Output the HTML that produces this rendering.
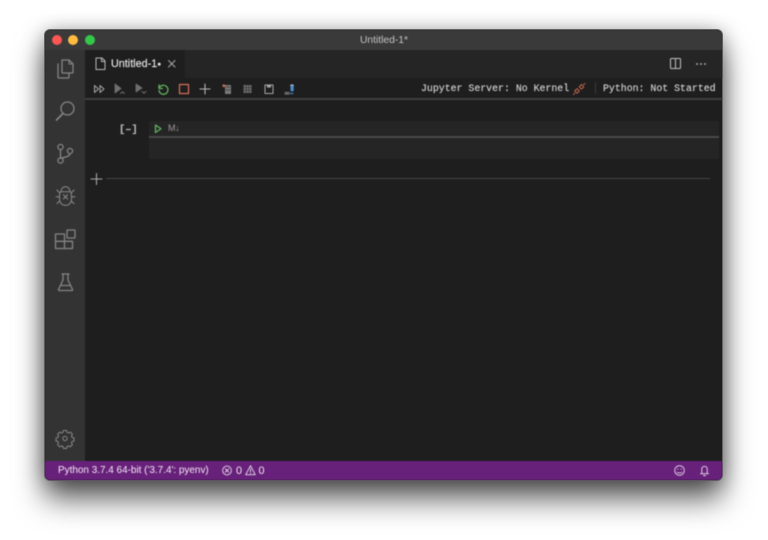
<!DOCTYPE html>
<html><head><meta charset="utf-8"><style>
html,body{margin:0;padding:0;width:768px;height:540px;overflow:hidden;background:#fff}
*{box-sizing:border-box}
.a{position:absolute}
#win{left:45px;top:30px;width:677px;height:450px;background:#1e1e1e;border-radius:5px;box-shadow:0 0 0 1px rgba(95,95,95,.85),0 19px 30px rgba(0,0,0,.62),0 2px 20px rgba(0,0,0,.38)}
#in{left:0;top:0;width:677px;height:450px;overflow:hidden;border-radius:5px;filter:blur(.4px)}
.sans{font-family:"Liberation Sans",sans-serif}
.mono{font-family:"Liberation Mono",monospace;font-size:9.9px;color:#d0d0d0;white-space:pre;-webkit-text-stroke:.15px #d0d0d0}
svg{position:absolute;overflow:visible;fill:none}
</style></head><body>
<div class="a" id="win"><div class="a" id="in">
<div class="a" style="left:0;top:0;width:677px;height:20px;background:#3a3a3a"></div>
<div class="a" style="left:7px;top:5px;width:10px;height:10px;border-radius:50%;background:#fc5753"></div>
<div class="a" style="left:23px;top:5px;width:10px;height:10px;border-radius:50%;background:#fdbc40"></div>
<div class="a" style="left:40px;top:5px;width:10px;height:10px;border-radius:50%;background:#34c84a"></div>
<div class="a sans" style="left:0;top:3px;width:678px;text-align:center;font-size:10.3px;color:#c4c4c4;line-height:15px">Untitled-1*</div>

<div class="a" style="left:0;top:20px;width:40px;height:411px;background:#333"></div>
<div class="a" style="left:40px;top:20px;width:638px;height:28px;background:#252526"></div>
<div class="a" style="left:40px;top:20px;width:100px;height:28px;background:#1e1e1e"></div>
<div class="a sans" style="left:66px;top:27px;font-size:10.8px;color:#e6e6e6;line-height:14px;white-space:pre;-webkit-text-stroke:.15px #e6e6e6">Untitled-1<span style="position:relative;top:-1.5px;font-size:6.5px">●</span></div>
<div class="a" style="left:40px;top:68px;width:638px;height:2px;background:#3f3f3f"></div>
<div class="a mono" style="left:376px;top:52px;line-height:14px">Jupyter Server: No Kernel</div>
<div class="a" style="left:550px;top:52px;width:1px;height:12px;background:#3c3c3c"></div>
<div class="a mono" style="left:558px;top:52px;line-height:14px">Python: Not Started</div>

<div class="a mono" style="left:74px;top:92.500px;line-height:14px;font-size:10.400px;font-weight:bold;color:#b4b4b4;-webkit-text-stroke:.2px #b4b4b4">[–]</div>
<div class="a" style="left:104px;top:91px;width:570px;height:38px;background:#252526"></div>
<div class="a" style="left:104px;top:106px;width:570px;height:2px;background:#4a4a4a"></div>
<div class="a sans" style="left:123px;top:92px;font-size:9px;color:#9a9a9a;line-height:13px;letter-spacing:-.3px">M↓</div>
<div class="a" style="left:61px;top:148px;width:604px;height:1px;background:#444"></div>

<div class="a" style="left:0;top:431px;width:677px;height:19px;background:#68217a"></div>
<div class="a sans" style="left:13px;top:433.500px;font-size:9.950px;color:#f3e9f5;line-height:14px;white-space:pre">Python 3.7.4 64-bit ('3.7.4': pyenv)</div>
<div class="a sans" style="left:191px;top:433.500px;font-size:10.800px;color:#f3e9f5;line-height:14px">0</div>
<div class="a sans" style="left:213.500px;top:433.500px;font-size:10.800px;color:#f3e9f5;line-height:14px">0</div>

<svg class="a" style="left:-45px;top:-30px" width="768" height="540" viewBox="0 0 768 540" stroke-linecap="round" stroke-linejoin="round">
<g stroke="#858585" stroke-width="1.3">
<path d="M58 64v13a1 1 0 0 0 1 1h9a1 1 0 0 0 1-1v-4M62 60h7l4 4v8a1 1 0 0 1-1 1h-9a1 1 0 0 1-1-1V61a1 1 0 0 1 1-1z"/>
<path d="M69 60v4h4" stroke-width="1"/>
<circle cx="67.500" cy="108.500" r="6.500"/><path d="M63 113.500l-6.500 6.500" stroke-width="1.600"/>
<circle cx="60.500" cy="147" r="2.600"/><circle cx="60.500" cy="160.500" r="2.600"/><circle cx="70" cy="151" r="2.600"/>
<path d="M60.500 149.600v8.300M70 153.600c0 2.500-4 3.400-9.500 4.700"/>
<g transform="translate(65.500 196) scale(.85) translate(-65.500 -197)">
<path d="M60.500 191a5 5 0 0 1 10 0M59.500 192h12l1 3v6a7 7 0 0 1-14 0v-6z"/>
<path d="M63 195.500l5 5M68 195.500l-5 5M58.500 193l-3-3M72.500 193l3-3M58 198h-3.500M73 198h3.500M58.500 203l-3 3M72.500 203l3 3"/>
</g>
<path d="M55.500 234h9v14.500h-9zM55.500 241.300h17v7.200h-8M64.500 234v7.300"/>
<rect x="67" y="230" width="8" height="8" rx=".5"/>
<path d="M62 274h7M63 274v6l-4.500 9.500c-.3.700.2 1 .8 1h12.400c.6 0 1.100-.3.800-1L68 280v-6M60.500 285.500h10"/>
<g transform="translate(65 438.500) scale(.8) translate(-65 -440)">
<path d="M63 430h4l.6 2.400 1.700.8 2.200-1.300 2.800 2.800-1.300 2.200.8 1.700 2.400.6v4l-2.400.6-.8 1.700 1.300 2.200-2.800 2.800-2.200-1.300-1.700.8-.6 2.400h-4l-.6-2.400-1.700-.8-2.200 1.300-2.800-2.800 1.300-2.200-.8-1.700-2.400-.6v-4l2.400-.6.8-1.700-1.300-2.200 2.800-2.800 2.200 1.300 1.700-.8z" stroke-width="1.300"/>
<circle cx="65" cy="440" r="2.700" stroke-width="1.300"/>
</g>
</g>
<path d="M96 58h6l3 3v8.500h-9zM101.500 58v3.500h3.500" stroke="#b8b8b8" stroke-width="1"/>
<path d="M168.500 60.500l6.500 6.500M175 60.500l-6.500 6.500" stroke="#a8a8a8" stroke-width="1"/>
<rect x="670.500" y="58.500" width="10" height="10" rx="1" stroke="#c0c0c0" stroke-width="1"/><path d="M675.500 58.500v10" stroke="#c0c0c0"/>
<g fill="#c0c0c0"><circle cx="697" cy="64" r=".9"/><circle cx="701" cy="64" r=".9"/><circle cx="705" cy="64" r=".9"/></g>
<path d="M94.500 85.500l4 3.500-4 3.500zM100 85.500l4 3.500-4 3.500z" stroke="#a8a8a8" stroke-width="1"/>
<path d="M115 84v9l6-4.500z" fill="#6f6f6f" stroke="#6f6f6f" stroke-width=".8"/><path d="M120.500 93.500l2-1.800 2 1.800" stroke="#707070" stroke-width="1"/>
<path d="M136 84v8l6-4z" fill="#6f6f6f" stroke="#6f6f6f" stroke-width=".8"/><path d="M142 91.500l2 1.800 2-1.800" stroke="#707070" stroke-width="1"/>
<path d="M159 85v3.500h3.500M159.300 88a4.500 4.500 0 1 1 -.3 2.500" stroke="#62b35f" stroke-width="1.300"/>
<rect x="179.500" y="84.500" width="9" height="9" stroke="#d9705c" stroke-width="1.200"/>
<path d="M200 89h10M205 84v10" stroke="#b8b8b8" stroke-width="1.100"/>
<rect x="225" y="85" width="6" height="9" fill="#7a7a7a"/><path d="M226 87h4M226 90h4" stroke="#333" stroke-width=".8"/><rect x="222.500" y="84.500" width="2.500" height="2.500" fill="#c86a55"/>
<rect x="243.500" y="85" width="8" height="8" fill="#6e6e6e"/><path d="M246.200 85v8M248.800 85v8M243.500 87.700h8M243.500 90.300h8" stroke="#333" stroke-width=".6"/>
<path d="M265 85h8v8.500h-8z" stroke="#a8a8a8" stroke-width="1"/><rect x="267" y="85" width="4" height="2.500" fill="#a8a8a8"/>
<path d="M285 92.500h4M285 94h4" stroke="#8a8a8a" stroke-width="1"/><rect x="290.500" y="85" width="3.200" height="6.500" rx="1.500" fill="#4c8dd0"/><path d="M290 93.500h3" stroke="#4c8dd0"/><path d="M290.500 85.500a2 2 0 0 1 3 0" stroke="#ddd" stroke-width=".8"/>
<path d="M577 88.700l2.300 2.300-2.300 2.300-2.300-2.300zM581.500 84.500l2.300 2.300-2.300 2.300-2.300-2.300zM574.700 93.300l-1.200 1.200M583.800 84.500l1-1" stroke="#c9694f" stroke-width="1"/>
<path d="M155.500 125v7.500l5.500-3.750z" stroke="#5fb35c" stroke-width="1.300"/>
<path d="M91 179h11M96.500 173.500v11" stroke="#a8a8a8" stroke-width="1.100"/>
<circle cx="227" cy="470.500" r="4.400" stroke="#e8dcec" stroke-width=".9"/><path d="M225.300 468.800l3.400 3.400M228.700 468.800l-3.400 3.400" stroke="#e8dcec" stroke-width=".9"/>
<path d="M250.500 465.700l4.700 9h-9.500z M250.500 469v3M250.500 473.300v.2" stroke="#e8dcec" stroke-width=".9"/>
<circle cx="679.500" cy="470.500" r="4.800" stroke="#e8dcec" stroke-width=".9"/><path d="M677.300 472.300c1 1 3.400 1 4.400 0M677.800 469v.3M681.200 469v.3" stroke="#e8dcec" stroke-width=".9"/>
<path d="M700.500 473.700h8M701.800 473.500v-4.500a2.700 2.700 0 0 1 5.400 0v4.500M703.500 475.500h2" stroke="#e8dcec" stroke-width=".9"/>
</svg>
</div></div>
</body></html>
